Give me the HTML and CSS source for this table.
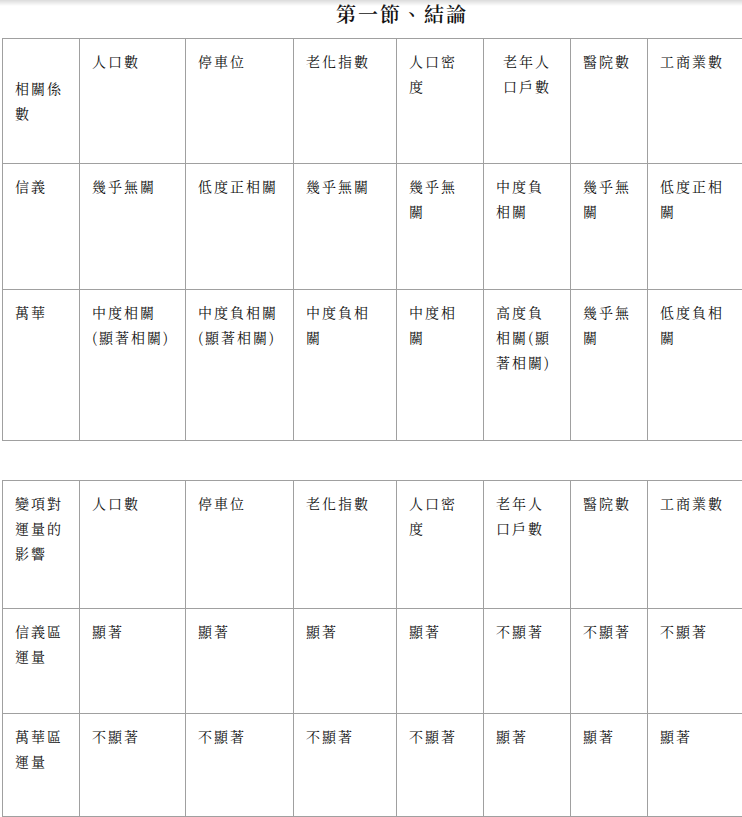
FILE: index.html
```html
<!DOCTYPE html>
<html lang="zh-Hant">
<head>
<meta charset="utf-8">
<title>第一節、結論</title>
<link rel="stylesheet" href="styles.css">
</head>
<body>
<div class="page">
  <h1 class="title">第一節、結論</h1>

  <table class="grid">
    <colgroup>
      <col class="c1"><col class="c2"><col class="c3"><col class="c4">
      <col class="c5"><col class="c6"><col class="c7"><col class="c8">
    </colgroup>
    <tr class="h125">
      <td class="mid">相關係數</td>
      <td>人口數</td>
      <td>停車位</td>
      <td>老化指數</td>
      <td>人口密度</td>
      <td class="center">老年人口戶數</td>
      <td>醫院數</td>
      <td>工商業數</td>
    </tr>
    <tr class="h126">
      <td>信義</td>
      <td>幾乎無關</td>
      <td>低度正相關</td>
      <td>幾乎無關</td>
      <td>幾乎無關</td>
      <td>中度負相關</td>
      <td>幾乎無關</td>
      <td>低度正相關</td>
    </tr>
    <tr class="h151">
      <td>萬華</td>
      <td>中度相關(顯著相關)</td>
      <td>中度負相關(顯著相關)</td>
      <td>中度負相關</td>
      <td>中度相關</td>
      <td>高度負相關(顯著相關)</td>
      <td>幾乎無關</td>
      <td>低度負相關</td>
    </tr>
  </table>

  <table class="grid second">
    <colgroup>
      <col class="c1"><col class="c2"><col class="c3"><col class="c4">
      <col class="c5"><col class="c6"><col class="c7"><col class="c8">
    </colgroup>
    <tr class="h128">
      <td>變項對運量的影響</td>
      <td>人口數</td>
      <td>停車位</td>
      <td>老化指數</td>
      <td>人口密度</td>
      <td>老年人口戶數</td>
      <td>醫院數</td>
      <td>工商業數</td>
    </tr>
    <tr class="h105">
      <td>信義區運量</td>
      <td>顯著</td>
      <td>顯著</td>
      <td>顯著</td>
      <td>顯著</td>
      <td>不顯著</td>
      <td>不顯著</td>
      <td>不顯著</td>
    </tr>
    <tr class="h103">
      <td>萬華區運量</td>
      <td>不顯著</td>
      <td>不顯著</td>
      <td>不顯著</td>
      <td>不顯著</td>
      <td>顯著</td>
      <td>顯著</td>
      <td>顯著</td>
    </tr>
  </table>
</div>
</body>
</html>
```

FILE: styles.css
```css
html, body {
  margin: 0;
  padding: 0;
  background: #ffffff;
}

body {
  font-family: "Noto Serif CJK TC", "Noto Sans CJK TC", "Liberation Serif", serif;
  color: #111111;
}

body::before {
  content: "";
  position: fixed;
  left: 0;
  right: 0;
  top: 0;
  height: 6px;
  background: linear-gradient(to bottom, rgba(210, 210, 210, 0.8), rgba(255, 255, 255, 0));
  pointer-events: none;
}

.page {
  width: 800px;
  padding-left: 2px;
}

.title {
  margin: 0;
  height: 38px;
  padding-top: 1px;
  box-sizing: border-box;
  font-size: 20px;
  line-height: 26px;
  font-weight: 600;
  letter-spacing: 2px;
  text-align: center;
}

.grid {
  border-collapse: collapse;
  table-layout: fixed;
  width: 745px;
  font-size: 14px;
  line-height: 25px;
  letter-spacing: 2px;
}

.second {
  margin-top: 39px;
}

.grid td {
  border: 1px solid #a0a0a0;
  padding: 10px 12px 0 12px;
  vertical-align: top;
  word-break: break-all;
}

.grid td.mid {
  vertical-align: middle;
  padding-top: 0;
}

.grid td.center {
  text-align: center;
}

.c1 { width: 77px; }
.c2 { width: 106px; }
.c3 { width: 108px; }
.c4 { width: 103px; }
.c5 { width: 87px; }
.c6 { width: 87px; }
.c7 { width: 77px; }
.c8 { width: 100px; }

.h125 { height: 125px; }
.h126 { height: 126px; }
.h151 { height: 151px; }
.h128 { height: 128px; }
.h105 { height: 105px; }
.h103 { height: 103px; }
```
